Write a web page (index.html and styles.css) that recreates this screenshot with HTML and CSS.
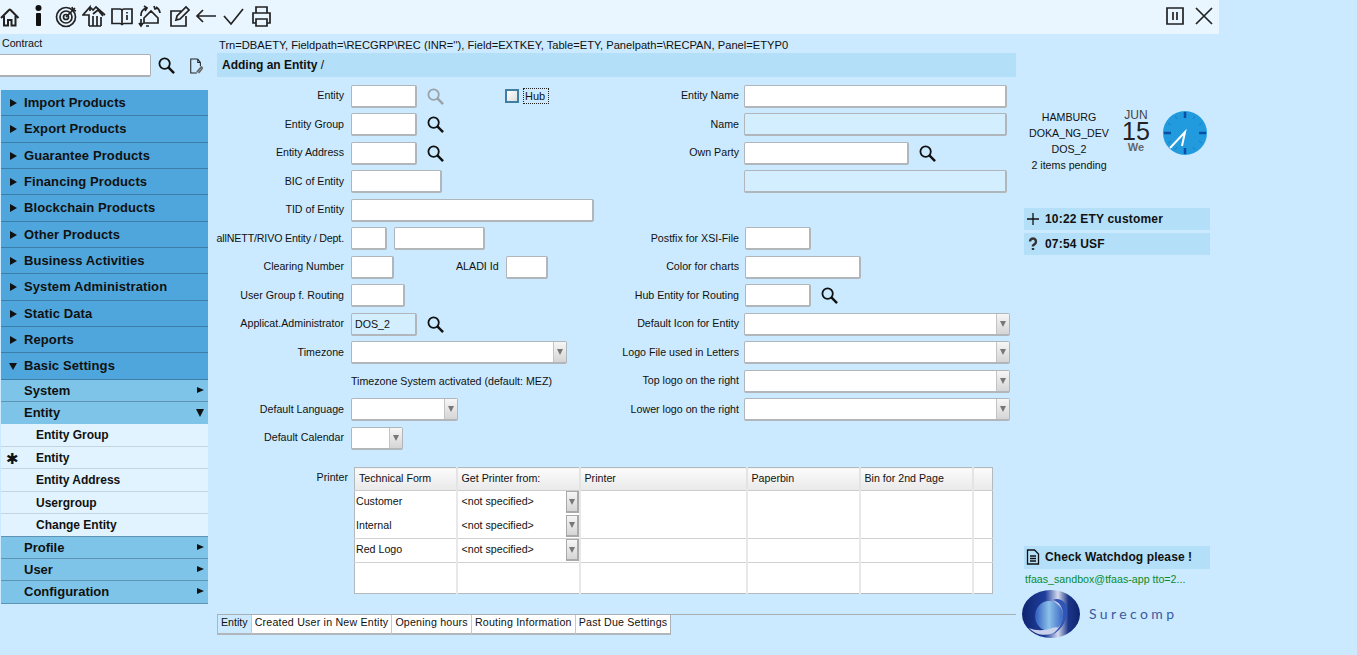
FILE: index.html

```html
<!DOCTYPE html>
<html lang="en">
<head>
  <meta charset="UTF-8" />
  <title>Adding an Entity</title>
  <link rel="stylesheet" href="styles.css">
</head>
<body>
  <div class="topbar">
    <div class="tools">
      <svg class="ico heavy" viewBox="0 0 24 24"><path d="M3 14 11 6a1.200 1.200 0 0 1 1.600 0L20.500 14M6 12v9.500h4V16h3.500v5.500h4V12"/></svg>
      <svg class="ico" viewBox="0 0 24 24"><circle class="solid" cx="12.500" cy="4" r="3"/><rect class="solid" x="10" y="9" width="5" height="13" rx="1"/></svg>
      <svg class="ico" viewBox="0 0 24 24"><circle cx="12" cy="13" r="9.500"/><circle cx="12" cy="13" r="6"/><circle cx="12" cy="13" r="2.500"/><path d="M12 13 21 4M18 3l1 3 3 1"/></svg>
      <svg class="ico" viewBox="0 0 24 24"><path d="M7 22V11H1l7-8v4M8 3l3 3 3-3 9 8M11 10l5-4 5 6M11 22V12M15 22V12M19 22V13M7 22h12"/></svg>
      <svg class="ico" viewBox="0 0 24 24"><path d="M2 5h8a2 2 0 0 1 2 2v14a2 2 0 0 0-2-1.500H2zM22 5h-8a2 2 0 0 0-2 2v14a2 2 0 0 1 2-1.500h8zM17 8v1.500M17 11v5"/></svg>
      <svg class="ico" viewBox="0 0 24 24"><path d="M6 14 13 7l7 7v5H6zM3 12a8 8 0 0 1 5-8M6 2l3 2-2 3M22 9a8 8 0 0 0-4-6M16 2l1 3 3-1M3 15v6M1 19l2 3 2-3M8 22h3"/></svg>
      <svg class="ico" viewBox="0 0 24 24"><path d="M15 7H5v15h15V12M10 16l1-4 9-9 3 3-9 9z"/></svg>
      <svg class="ico" viewBox="0 0 24 24"><path d="M3 12h19M9 6l-6 6 6 6"/></svg>
      <svg class="ico" viewBox="0 0 24 24"><path d="M2 12l7 8L21 5"/></svg>
      <svg class="ico" viewBox="0 0 24 24"><path d="M6 9V3h11v6M6 19H3V9h17v10h-3M6 15h11v7H6z"/></svg>
    </div>
    <div class="winbtns">
      <svg class="ico" viewBox="0 0 24 24"><path d="M5 4h16v16H5zM11 8v8M15 8v8"/></svg>
      <svg class="ico" viewBox="0 0 24 24"><path d="M5 4l16 16M21 4 5 20"/></svg>
    </div>
  </div>

  <div class="page">
    <div class="sidebar">
      <div class="contract-label">Contract</div>
      <div class="contract-row">
        <input class="contract-input" type="text">
        <svg class="lens" viewBox="0 0 18 18"><circle cx="7" cy="7" r="5.500"/><path d="M11 11l6 6"/></svg>
        <svg class="attach" viewBox="0 0 16 18"><path d="M10 1H2v16h7M10 1l3 4v4M10 1v4h3"/><path class="clip" d="M9 16l5-6a1.500 1.500 0 0 1 1 2l-4 5"/></svg>
      </div>
      <div class="menu">
        <div class="m1">Import Products</div>
        <div class="m1">Export Products</div>
        <div class="m1">Guarantee Products</div>
        <div class="m1">Financing Products</div>
        <div class="m1">Blockchain Products</div>
        <div class="m1">Other Products</div>
        <div class="m1">Business Activities</div>
        <div class="m1">System Administration</div>
        <div class="m1">Static Data</div>
        <div class="m1">Reports</div>
        <div class="m1 open">Basic Settings</div>
        <div class="m2">System</div>
        <div class="m2 open">Entity</div>
        <div class="m3">Entity Group</div>
        <div class="m3 current">Entity</div>
        <div class="m3">Entity Address</div>
        <div class="m3">Usergroup</div>
        <div class="m3">Change Entity</div>
        <div class="m2">Profile</div>
        <div class="m2">User</div>
        <div class="m2">Configuration</div>
      </div>
    </div>

    <div class="content">
      <div class="trn">Trn=DBAETY, Fieldpath=\RECGRP\REC (INR=''), Field=EXTKEY, Table=ETY, Panelpath=\RECPAN, Panel=ETYP0</div>
      <div class="title">Adding an Entity <span class="slash">/</span></div>

      <div class="form">
        <div class="lbl">Entity</div>
        <div class="fld">
          <input class="w66" type="text">
          <svg class="lens off" viewBox="0 0 18 18"><circle cx="7" cy="7" r="5.500"/><path d="M11 11l6 6"/></svg>
          <span class="check"></span><span class="hub">Hub</span>
        </div>
        <div class="lbl">Entity Name</div>
        <div class="fld"><input class="w263" type="text"></div>

        <div class="lbl">Entity Group</div>
        <div class="fld"><input class="w66" type="text"><svg class="lens" viewBox="0 0 18 18"><circle cx="7" cy="7" r="5.500"/><path d="M11 11l6 6"/></svg></div>
        <div class="lbl">Name</div>
        <div class="fld"><input class="w263 ro" type="text"></div>

        <div class="lbl">Entity Address</div>
        <div class="fld"><input class="w66" type="text"><svg class="lens" viewBox="0 0 18 18"><circle cx="7" cy="7" r="5.500"/><path d="M11 11l6 6"/></svg></div>
        <div class="lbl">Own Party</div>
        <div class="fld"><input class="w165" type="text"><svg class="lens" viewBox="0 0 18 18"><circle cx="7" cy="7" r="5.500"/><path d="M11 11l6 6"/></svg></div>

        <div class="lbl">BIC of Entity</div>
        <div class="fld"><input class="w91" type="text"></div>
        <div class="lbl"></div>
        <div class="fld"><input class="w263 ro" type="text"></div>

        <div class="lbl">TID of Entity</div>
        <div class="fld"><input class="w243" type="text"></div>
        <div class="lbl"></div>
        <div class="fld"></div>

        <div class="lbl tight">allNETT/RIVO Entity / Dept.</div>
        <div class="fld"><input class="w36" type="text"><input class="w91 near" type="text"></div>
        <div class="lbl">Postfix for XSI-File</div>
        <div class="fld"><input class="w66 right" type="text"></div>

        <div class="lbl">Clearing Number</div>
        <div class="fld"><input class="w43" type="text"><span class="aladi">ALADI Id</span><input class="w42" type="text"></div>
        <div class="lbl">Color for charts</div>
        <div class="fld"><input class="w116 right" type="text"></div>

        <div class="lbl">User Group f. Routing</div>
        <div class="fld"><input class="w54" type="text"></div>
        <div class="lbl">Hub Entity for Routing</div>
        <div class="fld"><input class="w66 right" type="text"><svg class="lens" viewBox="0 0 18 18"><circle cx="7" cy="7" r="5.500"/><path d="M11 11l6 6"/></svg></div>

        <div class="lbl">Applicat.Administrator</div>
        <div class="fld"><input class="w66 ro" type="text" value="DOS_2"><svg class="lens" viewBox="0 0 18 18"><circle cx="7" cy="7" r="5.500"/><path d="M11 11l6 6"/></svg></div>
        <div class="lbl">Default Icon for Entity</div>
        <div class="fld"><div class="sel w266"><i></i></div></div>

        <div class="lbl">Timezone</div>
        <div class="fld"><div class="sel w216"><i></i></div></div>
        <div class="lbl">Logo File used in Letters</div>
        <div class="fld"><div class="sel w266"><i></i></div></div>

        <div class="lbl"></div>
        <div class="fld">Timezone System activated (default: MEZ)</div>
        <div class="lbl">Top logo on the right</div>
        <div class="fld"><div class="sel w266"><i></i></div></div>

        <div class="lbl">Default Language</div>
        <div class="fld"><div class="sel w107"><i></i></div></div>
        <div class="lbl">Lower logo on the right</div>
        <div class="fld"><div class="sel w266"><i></i></div></div>

        <div class="lbl">Default Calendar</div>
        <div class="fld"><div class="sel w52"><i></i></div></div>
        <div class="lbl"></div>
        <div class="fld"></div>
      </div>

      <div class="printer">
        <div class="printer-lbl">Printer</div>
        <table class="grid">
          <colgroup><col class="c1"><col class="c2"><col class="c3"><col class="c4"><col class="c5"><col class="c6"></colgroup>
          <tr><th>Technical Form</th><th>Get Printer from:</th><th>Printer</th><th>Paperbin</th><th>Bin for 2nd Page</th><th></th></tr>
          <tr class="noline"><td>Customer</td><td class="pick">&lt;not specified&gt;<i></i></td><td></td><td></td><td></td><td></td></tr>
          <tr><td>Internal</td><td class="pick">&lt;not specified&gt;<i></i></td><td></td><td></td><td></td><td></td></tr>
          <tr><td>Red Logo</td><td class="pick">&lt;not specified&gt;<i></i></td><td></td><td></td><td></td><td></td></tr>
          <tr class="blank"><td></td><td></td><td></td><td></td><td></td><td></td></tr>
        </table>
      </div>

      <div class="tabs">
        <div class="tab active">Entity</div>
        <div class="tab">Created User in New Entity</div>
        <div class="tab">Opening hours</div>
        <div class="tab">Routing Information</div>
        <div class="tab">Past Due Settings</div>
      </div>
    </div>

    <div class="side">
      <div class="status">
        <div class="who">
          <div>HAMBURG</div>
          <div>DOKA_NG_DEV</div>
          <div>DOS_2</div>
          <div>2 items pending</div>
        </div>
        <div class="date">
          <div class="mon">JUN</div>
          <div class="day">15</div>
          <div class="wd">We</div>
        </div>
        <svg class="clock" viewBox="0 0 46 46">
          <circle cx="23" cy="23" r="22" fill="#229ade"/>
          <path stroke="#0a4fa5" stroke-width="2.500" d="M23 2v6M23 38v6M2 23h7M37 23h7"/>
          <path stroke="#1a7fc4" stroke-width="1" d="M33 6l-2 3M40 13l-3 2M40 33l-3-2M33 40l-2-3M13 40l2-3M6 33l3-2M6 13l3 2M13 6l2 3"/>
          <path stroke="#fff" stroke-width="2" fill="none" d="M8 38 23 22 20 36"/>
        </svg>
      </div>
      <div class="band first"><svg class="bi" viewBox="0 0 14 14"><path d="M7 1v12M1 7h12"/></svg>10:22 ETY customer</div>
      <div class="band"><svg class="bi" viewBox="0 0 14 14"><path class="fat" d="M4 4.500a3 3 0 1 1 4.500 2.600L7 8.500v1M7 11v2"/></svg>07:54 USF</div>
      <div class="band watch"><svg class="bi doc" viewBox="0 0 14 16"><path d="M1.500 1h7l4 4v10h-11zM4 7h6M4 9.500h6M4 12h6"/></svg>Check Watchdog please !</div>
      <div class="mail">tfaas_sandbox@tfaas-app tto=2...</div>
      <div class="brand">
        <svg class="logo" viewBox="0 0 58 48">
          <defs>
            <linearGradient id="lg1" x1="0" x2="1" y1="0" y2="0">
              <stop offset="0" stop-color="#0f2470"/><stop offset="0.4" stop-color="#1f3f9c"/>
              <stop offset="0.62" stop-color="#d5dbee"/><stop offset="0.8" stop-color="#1b3688"/><stop offset="1" stop-color="#10246f"/>
            </linearGradient>
            <linearGradient id="lg2" x1="0" x2="1" y1="0" y2="0">
              <stop offset="0" stop-color="#2f5cc0"/><stop offset="0.5" stop-color="#8cc2ea"/><stop offset="1" stop-color="#3a66c4"/>
            </linearGradient>
          </defs>
          <ellipse cx="29" cy="24" rx="29" ry="24" fill="url(#lg1)"/>
          <ellipse cx="27" cy="26" rx="14" ry="15" fill="url(#lg2)"/>
          <path fill="#c9d2ea" d="M7 38c8 9 22 8 27 3 3-3 2-5-4-3-8 3-16 3-23 0z"/>
          <path fill="#2f55b8" d="M31 10c5-3 13 0 14 9 1 9-4 20-15 26 8-7 12-14 11-23-1-6-4-10-10-12z"/>
        </svg>
        <span class="brand-name">Surecomp</span>
      </div>
    </div>
  </div>
</body>
</html>
```

FILE: styles.css

```css
* { box-sizing: border-box; }
body { margin: 0; background: #cbeaff; font-family: "Liberation Sans", Arial, sans-serif; font-size: 10.67px; color: #111; overflow: hidden; }

/* top bar */
.topbar { width: 1219px; height: 34px; background: #e9f6ff; display: flex; justify-content: space-between; padding-top: 4px; }
.tools { display: flex; gap: 4px; margin-left: -2px; }
.winbtns { display: flex; gap: 5px; margin-right: 4px; }
.ico { width: 24px; height: 24px; fill: none; stroke: #222; stroke-width: 1.700; }
.ico.heavy { stroke-width: 2; }
.ico .solid { fill: #111; stroke: none; }

/* left menu */
.page { display: flex; }
.sidebar { width: 208px; flex: none; }
.contract-label { padding: 3px 0 0 2px; height: 20px; line-height: 13px; }
.contract-row { display: flex; align-items: center; height: 23px; margin-left: -4px; }
.contract-input { width: 155px; height: 23px; border: 1px solid #aab0b3; border-bottom-width: 2px; border-radius: 2px; background: #fff; }
.lens { width: 17px; height: 17px; fill: none; stroke: #111; stroke-width: 1.900; flex: none; }
.lens path { stroke-width: 2.600; }
.lens.off { stroke: #9aa3a8; }
.contract-row .lens { margin-left: 7px; }
.attach { width: 14px; height: 18px; margin-left: 14px; fill: none; stroke: #222; stroke-width: 1.200; }
.attach .clip { stroke: #666; stroke-width: 1.800; }
.menu { margin: 13px 0 0 1px; width: 206.500px; }
.m1 { height: 26.350px; line-height: 26px; background: #4fa6dc; border-bottom: 1px solid #3c7ea8; padding-left: 23px; font-size: 13px; font-weight: bold; position: relative; letter-spacing: 0.1px; }
.m1::before { content: ""; position: absolute; left: 9px; top: 9px; border-left: 7px solid #111; border-top: 4px solid transparent; border-bottom: 4px solid transparent; }
.m1.open::before { left: 8px; top: 10px; border-top: 7px solid #111; border-left: 4px solid transparent; border-right: 4px solid transparent; border-bottom: 0; }
.m2 { height: 22.300px; line-height: 21px; background: #7ec4e8; border-bottom: 1px solid #5d93b3; padding-left: 23px; font-size: 13px; font-weight: bold; position: relative; }
.m2::after { content: ""; position: absolute; left: 196px; top: 7px; border-left: 7px solid #111; border-top: 3.500px solid transparent; border-bottom: 3.500px solid transparent; }
.m2.open { border-bottom: 0; }
.m2.open::after { left: 195px; top: 7px; border-top: 8px solid #111; border-left: 4.500px solid transparent; border-right: 4.500px solid transparent; border-bottom: 0; }
.m3 { height: 22.500px; line-height: 22px; background: #e0f3ff; border-bottom: 1px solid #c3d5e0; padding-left: 35px; font-size: 12px; font-weight: bold; position: relative; }
.m3:nth-last-child(4) { border-bottom: 1px solid #5d93b3; }
.m3.current::before { content: "\2731"; position: absolute; left: 5px; top: 3px; font: 15px/18px "DejaVu Sans", sans-serif; color: #111; }

/* centre */
.content { width: 799px; margin-left: 9px; flex: none; }
.trn { height: 19px; padding: 4px 0 0 2px; line-height: 14px; font-size: 11.150px; }
.title { height: 24px; line-height: 24px; background: #b3dff8; padding-left: 5px; font-size: 12px; font-weight: bold; }
.slash { font-weight: normal; }
.form { display: grid; grid-template-columns: 134px 269px 124px 266px; grid-auto-rows: 28.500px; margin-top: 5px; }
.lbl { display: flex; align-items: center; justify-content: flex-end; padding: 0 7px 2px 0; white-space: nowrap; }
.lbl.tight { letter-spacing: -0.150px; }
.form .lbl:nth-child(4n+3) { padding-right: 5px; }
.fld { display: flex; align-items: center; }
input { font: 10.67px "Liberation Sans", Arial, sans-serif; height: 23px; padding: 1px 3px; border: 1px solid #b0b6ba; border-bottom-width: 2px; border-right-width: 2px; border-radius: 2px; background: #fff; color: #111; }
input.ro { background: #d2eeff; }
input.right { margin-left: 1px; }
.w36 { width: 36px; }
.w42 { width: 42px; }
.w43 { width: 43px; }
.w54 { width: 54px; }
.w66 { width: 66px; }
.w91 { width: 91px; }
.w116 { width: 116px; }
.w165 { width: 165px; }
.w243 { width: 243px; }
.w263 { width: 263px; }
.w52 { width: 52px; }
.w107 { width: 107px; }
.w216 { width: 216px; }
.w266 { width: 266px; }
.near { margin-left: 7px; }
.fld .lens { margin-left: 10px; }
.check { width: 14px; height: 14px; margin-left: 61px; border: 2px solid #3f7fa6; background: linear-gradient(135deg, #fff, #ddd); }
.hub { margin-left: 4px; padding: 1px 3px 1px 1px; border: 1px dotted #222; line-height: 12px; font-size: 11px; }
.aladi { margin-left: 62px; width: 43px; white-space: nowrap; padding-bottom: 2px; }
.aladi + input { margin-left: 7px; }
.sel { height: 23px; background: #fff; border: 1px solid #b0b6ba; border-bottom-width: 2px; border-radius: 2px; display: flex; justify-content: flex-end; }
.sel i, .pick i { display: flex; align-items: center; justify-content: center; width: 13px; background: linear-gradient(#f6f6f6, #d5d5d5); border-left: 1px solid #c4c4c4; }
.sel i::after, .pick i::after { content: ""; border-top: 6px solid #777; border-left: 3.500px solid transparent; border-right: 3.500px solid transparent; }

/* printer table */
.printer { display: flex; margin-top: 14.500px; }
.printer-lbl { width: 137px; padding: 4px 6px 0 0; text-align: right; }
.grid { width: 638px; height: 127px; border-collapse: collapse; table-layout: fixed; background: #fff; border: 1px solid #b4b9bc; align-self: flex-start; }
.c1 { width: 102px; }
.c2 { width: 123px; }
.c3 { width: 167px; }
.c4 { width: 113px; }
.c5 { width: 113px; }
.c6 { width: 20px; }
.grid th { height: 23px; padding: 0 0 3px 4px; font-weight: normal; text-align: left; background: linear-gradient(#fbfbfb, #e9e9e9); border-right: 2px solid #e4e4e4; border-bottom: 1px solid #ccc; }
.grid th:last-child, .grid td:last-child { border-right: 0; }
.grid td { height: 24px; padding: 0 0 3px 1px; border-right: 2px solid #e8e8e8; border-bottom: 1px solid #d2d2d2; }
.grid tr.noline td { border-bottom: 0; }
.grid tr.blank td { height: 31px; border-bottom: 0; }
.grid td.pick { position: relative; padding-left: 4px; }
.pick i { position: absolute; right: 0; top: 0; height: 22px; width: 13px; border: 1px solid #aaa; border-width: 1px 2px 2px 1px; }

/* tabs */
.tabs { display: flex; margin-top: 20px; border-top: 1px solid #a8b0b4; height: 20px; }
.tab { height: 20px; padding: 0 3px; line-height: 15px; background: #fff; border-right: 1px solid #c8c8c8; border-bottom: 2px solid #b0b6ba; letter-spacing: 0.200px; }
.tab.active { background: #cbeaff; border-left: 1px solid #b0b6ba; letter-spacing: 0; }
.tab:last-child { border-right: 1px solid #aab0b3; }

/* right column */
.side { width: 186px; margin-left: 8px; flex: none; }
.status { display: flex; height: 174px; padding-top: 75px; }
.who { width: 90px; text-align: center; line-height: 16px; }
.date { width: 34px; margin-left: 5px; text-align: center; color: #444; }
.mon { font-size: 12px; line-height: 13px; }
.day { font-size: 25px; line-height: 19px; color: #222; }
.wd { font-size: 11px; font-weight: bold; line-height: 13px; color: #666; }
.clock { width: 46px; height: 46px; margin: 1px 0 0 9px; }
.band { height: 22px; margin-bottom: 2.500px; background: #b3dff8; display: flex; align-items: center; font-size: 12px; font-weight: bold; letter-spacing: 0.200px; padding-left: 2px; }
.bi { width: 14px; height: 14px; margin-right: 5px; fill: none; stroke: #111; stroke-width: 1.300; flex: none; }
.bi .fat { stroke-width: 2.400; stroke: #333; }
.bi.doc { height: 16px; }
.watch { margin-top: 291px; height: 23px; letter-spacing: 0.100px; }
.mail { margin: 4px 0 0 1px; color: #0a8a2b; line-height: 13px; }
.brand { display: flex; align-items: center; margin: 4px 0 0 -2px; }
.logo { width: 58px; height: 48px; flex: none; }
.brand-name { margin-left: 9px; font: 14px "Lato", sans-serif; letter-spacing: 3.400px; color: #3a5aa0; }
```
